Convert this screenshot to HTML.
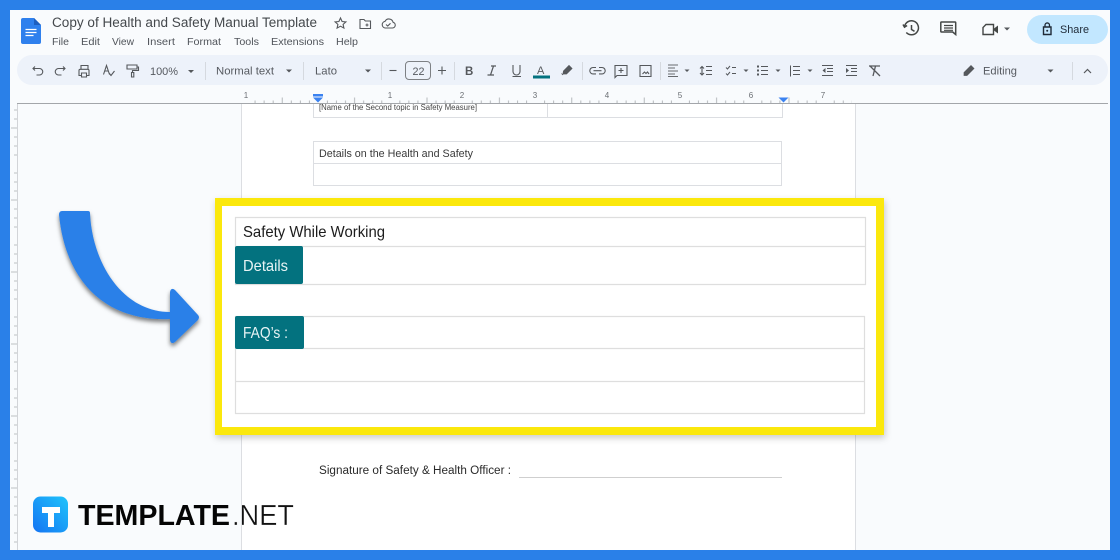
<!DOCTYPE html>
<html lang="en"><head><meta charset="utf-8"><title>Template</title>
<style>
html,body{margin:0;padding:0;width:1120px;height:560px;overflow:hidden;background:#fff}
svg{display:block;font-family:"Liberation Sans",sans-serif}
text{filter:blur(.25px)}
.ic{fill:none;stroke:#55585c;stroke-width:1.1}
.f{fill:#55585c;stroke:none}
.m{font-size:10px;fill:#50545a}
.t{font-size:11px;fill:#55595f}
.l{stroke:#dcdee2;stroke-width:1;fill:none}
</style></head><body>
<svg width="1120" height="560" viewBox="0 0 1120 560" xmlns="http://www.w3.org/2000/svg">
<defs>
<pattern id="rt" x="246" y="88" width="72.4" height="16" patternUnits="userSpaceOnUse">
<path d="M9.05 12.500v3M18.1 12.500v3M27.15 12.500v3M36.2 9.500v6M45.25 12.500v3M54.3 12.500v3M63.35 12.500v3" stroke="#a5a8ac" stroke-width=".8"/>
</pattern>
<pattern id="rv" x="11" y="164" width="7" height="72" patternUnits="userSpaceOnUse">
<path d="M3 9h3M3 18h3M3 27h3M0 36h6M3 45h3M3 54h3M3 63h3" stroke="#a9adb1" stroke-width=".8"/>
</pattern>
<linearGradient id="lg" x1="0" y1="1" x2="1" y2="0"><stop offset="0" stop-color="#1474f3"/><stop offset="1" stop-color="#20c4fb"/></linearGradient>
<filter id="as" x="-30%" y="-30%" width="160%" height="160%"><feDropShadow dx="0" dy="3" stdDeviation="2.2" flood-color="#000" flood-opacity=".5"/></filter>
<filter id="ys" x="-5%" y="-5%" width="110%" height="110%"><feDropShadow dx="1" dy="3" stdDeviation="3.5" flood-color="#000" flood-opacity=".2"/></filter>
</defs>

<rect width="1120" height="560" fill="#f9fbfd"/>

<!-- doc logo -->
<path d="M23 18h11l7 7v17a2 2 0 0 1-2 2H23a2 2 0 0 1-2-2V20a2 2 0 0 1 2-2z" fill="#2f80ed"/>
<path d="M34 18l7 7h-7z" fill="#1e5fc0"/>
<path d="M25.500 29.500h11M25.500 32.500h11M25.500 35.500h8" stroke="#fff" stroke-width="1.200"/>

<!-- title / menu -->
<text x="52" y="27" font-size="13.500" fill="#44484c" textLength="265" lengthAdjust="spacingAndGlyphs">Copy of Health and Safety Manual Template</text>
<path class="ic" d="M340.500 18l1.600 3.500 3.800.4-2.800 2.500.8 3.700-3.400-1.900-3.400 1.900.8-3.700-2.800-2.500 3.800-.4z"/>
<path class="ic" d="M360 19.500h4l1.300 1.500h5.200v7.500H360zM365.500 25h3M367 23.500v3"/>
<path class="ic" d="M385 28h7.500a2.900 2.900 0 0 0 .6-5.700 4.300 4.300 0 0 0-8-1 3.400 3.400 0 0 0-.1 6.700zM386 24.500l1.700 1.500 2.800-2.700"/>
<text class="m" x="52" y="45" textLength="17" lengthAdjust="spacingAndGlyphs">File</text>
<text class="m" x="81" y="45" textLength="19" lengthAdjust="spacingAndGlyphs">Edit</text>
<text class="m" x="112" y="45" textLength="22" lengthAdjust="spacingAndGlyphs">View</text>
<text class="m" x="147" y="45" textLength="28" lengthAdjust="spacingAndGlyphs">Insert</text>
<text class="m" x="187" y="45" textLength="34" lengthAdjust="spacingAndGlyphs">Format</text>
<text class="m" x="234" y="45" textLength="25" lengthAdjust="spacingAndGlyphs">Tools</text>
<text class="m" x="271" y="45" textLength="53" lengthAdjust="spacingAndGlyphs">Extensions</text>
<text class="m" x="336" y="45" textLength="22" lengthAdjust="spacingAndGlyphs">Help</text>

<!-- top right -->
<path d="M904.500 27a7 7 0 1 1 1.800 5.500M903 24.500l1.500 2.700 2.600-1.700M911.500 25v4.500l3 1.800" fill="none" stroke="#444746" stroke-width="1.500"/>
<path d="M941.500 22h13.500a.7.700 0 0 1 .7.700v11.800l-3-2.500h-11.200a.7.700 0 0 1-.7-.7v-8.600a.7.700 0 0 1 .7-.7z" fill="none" stroke="#444746" stroke-width="1.500"/>
<path d="M944 25.500h9M944 28h9M944 30.300h9" stroke="#444746" stroke-width="1.200"/>
<path d="M986 24.500h7.500v10H983v-7z" fill="none" stroke="#444746" stroke-width="1.400"/>
<path d="M994 28.500l4-3v8l-4-3z" fill="#444746"/>
<path class="f" d="M1004 27.500h6l-3 3z"/>
<rect x="1027" y="15" width="81" height="29" rx="14.500" fill="#c2e7ff"/>
<path d="M1043.500 27h7.500v7.500h-7.500z" fill="none" stroke="#1f2a37" stroke-width="1.400"/>
<path d="M1045 27v-1.800a2.200 2.200 0 0 1 4.500 0V27" fill="none" stroke="#1f2a37" stroke-width="1.300"/>
<circle cx="1047.200" cy="30.800" r="1" fill="#1f2a37"/>
<text x="1060" y="33" font-size="11" fill="#1f2a37" textLength="29" lengthAdjust="spacingAndGlyphs">Share</text>

<!-- toolbar -->
<rect x="17" y="55" width="1091" height="30" rx="15" fill="#edf2fa"/>
<g class="ic">
<path d="M33 68.500h6.500a2.800 2.800 0 0 1 0 6.500h-3M35 66.500l-2 2 2 2"/>
<path d="M65 68.500h-6.500a2.800 2.800 0 0 0 0 6.500h3M63 66.500l2 2-2 2"/>
<path d="M81 69v-3.500h7V69M81 75.500h-2v-5a1.200 1.200 0 0 1 1-1.200h8a1.200 1.200 0 0 1 1 1.200v5h-2.500M81.500 73h5v4h-5z"/>
<path d="M103.500 74.500l3-9 3 9M104.500 71h4M109 73l2 2.500 3.500-4.500"/>
<path d="M127 65h10v4h-10zM137 67h1.500v3.500H132.500v2M131.500 72.500h2.300v4.500h-2.300z"/>
</g>
<text class="t" x="150" y="75" textLength="28" lengthAdjust="spacingAndGlyphs">100%</text>
<path class="f" d="M188 70h6l-3 3z"/>
<path d="M205.500 62v18" stroke="#d5d9df"/>
<text class="t" x="216" y="74.500" textLength="58" lengthAdjust="spacingAndGlyphs">Normal text</text>
<path class="f" d="M286 69.500h6l-3 3z"/>
<path d="M303.500 62v18" stroke="#d5d9df"/>
<text class="t" x="315" y="74.500" textLength="22" lengthAdjust="spacingAndGlyphs">Lato</text>
<path class="f" d="M365 69.500h6l-3 3z"/>
<path d="M381.500 62v18" stroke="#d5d9df"/>
<path d="M389.500 70.500h7" stroke="#55585c" stroke-width="1.100"/>
<rect x="405.500" y="61.500" width="25" height="18" rx="3.500" fill="none" stroke="#7d8084"/>
<text class="t" x="412.500" y="75" textLength="12" lengthAdjust="spacingAndGlyphs">22</text>
<path d="M438 70.500h8M442 66.500v8" stroke="#55585c" stroke-width="1.100"/>
<path d="M454.500 62v18" stroke="#d5d9df"/>
<text x="465" y="75" font-size="11.500" font-weight="bold" fill="#55585c">B</text>
<path d="M491 66h5M490 75h-2.500M489 75h5M493.500 66l-3 9" fill="none" stroke="#55585c" stroke-width="1.200"/>
<path d="M513 65v6.500a3.500 3.500 0 0 0 7 0V65M512.500 76.500h8.500" fill="none" stroke="#55585c" stroke-width="1.100"/>
<text x="537" y="74" font-size="11" fill="#55585c">A</text>
<rect x="533" y="75.500" width="17" height="3" fill="#03727f"/>
<path d="M563.500 71l5.500-5.500 3 3-5.500 5.500h-3.500zM561.500 73.500l1.500 1.500" fill="#55585c" stroke="#55585c" stroke-width=".8"/>
<path d="M582.500 62v18" stroke="#d5d9df"/>
<g class="ic">
<path d="M595.500 67.500h-3a3.200 3.200 0 0 0 0 6.400h3M598.500 67.500h3a3.200 3.200 0 0 1 0 6.400h-3M593 70.700h8" transform="translate(.5 0) scale(1) "/>
<path d="M615 65.500h12v10h-10l-2 2zM621 68v5M618.500 70.500h5"/>
<path d="M640 65.500h11v11h-11zM642.500 74l2-2 1.500 1.500 1.500-1.500 1.500 2"/>
</g>
<path d="M660.500 62v18" stroke="#d5d9df"/>
<path d="M668 65h10M668 68h7M668 71h10M668 74h7M668 76.500h10" stroke="#66696d" stroke-width=".9"/>
<path class="f" d="M684.500 69.500h5l-2.500 2.500z"/>
<path d="M702 67v7.500M700 68.500l2-2 2 2M700 73l2 2 2-2M706 66.500h6M706 70.500h6M706 74.500h6" fill="none" stroke="#55585c" stroke-width="1.100"/>
<path d="M726 67.500l1.500 1.500 2.500-3M726 73.500l1.500 1.500 2.500-3M732 67.500h4M732 73.500h4" fill="none" stroke="#55585c" stroke-width="1"/>
<path class="f" d="M743.500 69.500h5l-2.500 2.500z"/>
<path d="M757 66.500h2M757 70.500h2M757 74.500h2" stroke="#55585c" stroke-width="2"/>
<path d="M761 66.500h7M761 70.500h7M761 74.500h7" stroke="#55585c" stroke-width="1.100"/>
<path class="f" d="M775.500 69.500h5l-2.500 2.500z"/>
<path d="M790.500 65.500v11M793 66.500h7M793 70.500h7M793 74.500h7" fill="none" stroke="#55585c" stroke-width="1"/>
<path class="f" d="M807.500 69.500h5l-2.500 2.500z"/>
<path d="M822 65.500h11M827 68.500h6M827 71.500h6M822 75.500h11" stroke="#55585c" stroke-width="1"/>
<path class="f" d="M825.500 68l-3 2.500 3 2.500z"/>
<path d="M846 65.500h11M851 68.500h6M851 71.500h6M846 75.500h11" stroke="#55585c" stroke-width="1"/>
<path class="f" d="M846 68l3 2.500-3 2.500z"/>
<path d="M869 66h11M875.500 66l-2.500 10M870 66l10 10" fill="none" stroke="#55585c" stroke-width="1.300"/>
<path d="M964 75.500v-3l7-7 3 3-7 7z" fill="#55585c" stroke="#55585c" stroke-width=".7"/>
<text class="t" x="983" y="74.500" textLength="34" lengthAdjust="spacingAndGlyphs">Editing</text>
<path class="f" d="M1047.500 69.500h6l-3 3z"/>
<path d="M1072.500 62v18" stroke="#d5d9df"/>
<path d="M1084 73l3.500-3.500 3.500 3.500" fill="none" stroke="#55585c" stroke-width="1.200"/>

<!-- page -->
<rect x="241" y="103" width="614" height="447" fill="#fff"/>
<path d="M241.500 103v447M855.500 103v447" stroke="#dcdee2"/>

<!-- rulers -->
<rect x="246" y="88" width="606" height="16" fill="url(#rt)"/>
<path d="M17 103.500h1091" stroke="#a3a6aa"/>
<g font-size="8" fill="#6a6e73" text-anchor="middle">
<text x="246" y="98">1</text><text x="390" y="98">1</text><text x="462" y="98">2</text><text x="535" y="98">3</text><text x="607" y="98">4</text><text x="680" y="98">5</text><text x="751" y="98">6</text><text x="823" y="98">7</text>
</g>
<rect x="11" y="104" width="7" height="446" fill="url(#rv)"/>
<path d="M17.500 104v446" stroke="#d2d4d8"/>
<path d="M313 94h10v2.500h-10zM313 97.500h10l-5 5z" fill="#3b82f0"/>
<path d="M778.500 97.500h10l-5 5z" fill="#3b82f0"/>

<!-- tables behind -->
<path class="l" d="M313.500 104v13.500h469V104M547.500 104v13.500"/>
<text x="319" y="110" font-size="8" fill="#444" textLength="158" lengthAdjust="spacingAndGlyphs">[Name of the Second topic in Safety Measure]</text>
<path class="l" d="M313.500 141.500h468v44h-468zM313.500 163.500h468"/>
<text x="319" y="157" font-size="11" fill="#3a3a3a" textLength="154" lengthAdjust="spacingAndGlyphs">Details on the Health and Safety</text>
<text x="319" y="474" font-size="11.500" fill="#2a2a2a" textLength="192" lengthAdjust="spacingAndGlyphs">Signature of Safety &amp; Health Officer :</text>
<path d="M519 477.500h263" stroke="#cfcfcf"/>

<!-- highlight box -->
<rect x="215" y="198" width="669" height="237" fill="#fbe80c" filter="url(#ys)"/>
<rect x="222" y="206" width="654" height="221" fill="#fff"/>
<path d="M235.500 217.500h630v67h-630zM235.500 246.500h630" fill="none" stroke="#dedede" stroke-width="1.200"/>
<path d="M235.500 316.500h629v97h-629zM235.500 348.500h629M235.500 381.500h629" fill="none" stroke="#dedede" stroke-width="1.200"/>
<rect x="235" y="246" width="68" height="38" rx="2" fill="#03727f"/>
<rect x="235" y="316" width="69" height="33" rx="2" fill="#03727f"/>
<text x="243" y="237" font-size="16" fill="#1c1c1c" textLength="142" lengthAdjust="spacingAndGlyphs">Safety While Working</text>
<text x="243" y="271" font-size="16" fill="#e8f4f5" textLength="45" lengthAdjust="spacingAndGlyphs">Details</text>
<text x="243" y="338" font-size="16" fill="#e8f4f5" textLength="45" lengthAdjust="spacingAndGlyphs">FAQ’s :</text>

<!-- arrow -->
<path d="M62 211H88Q90 211 90 213C92 262 122 312 170 312V292Q171 287 175 290L198 315Q200 317 198 320L175 342Q171 345 170 340V319C108 322 66 284 59 215Q59 211 62 211Z" fill="#2b80e8" filter="url(#as)"/>

<!-- logo -->
<rect x="33" y="496.500" width="35" height="36" rx="7.500" fill="url(#lg)"/>
<path d="M42 507h18v6h-6v14h-6v-14h-6z" fill="#fff"/>
<text x="78" y="525" font-size="29" font-weight="bold" fill="#050505" textLength="152" lengthAdjust="spacingAndGlyphs">TEMPLATE</text>
<text x="232" y="525" font-size="29" fill="#111" textLength="62" lengthAdjust="spacingAndGlyphs" stroke="#fff" stroke-width=".35">.NET</text>

<!-- blue frame -->
<path d="M0 0h1120v560H0zM10 10v540h1100V10z" fill="#2a80e8" fill-rule="evenodd"/>
</svg>
</body></html>
